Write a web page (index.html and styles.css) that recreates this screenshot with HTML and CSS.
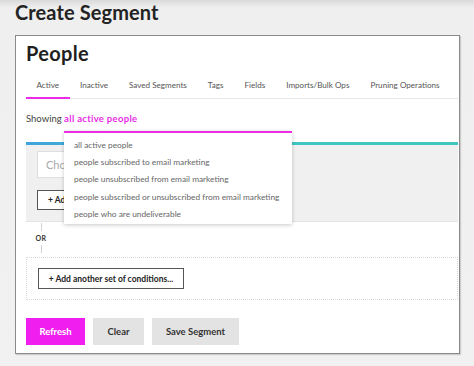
FILE: index.html
```html
<!DOCTYPE html>
<html lang="en">
<head>
    <meta charset="UTF-8">
    <title>Create Segment</title>
    <link rel="stylesheet" href="styles.css">
</head>
<body>
<h1 class="page-title">Create Segment</h1>
<div class="card">
    <h2 class="card-title">People</h2>
    <ul class="tabs">
        <li class="active">Active</li>
        <li>Inactive</li>
        <li>Saved Segments</li>
        <li>Tags</li>
        <li>Fields</li>
        <li>Imports/Bulk Ops</li>
        <li>Pruning Operations</li>
    </ul>
    <div class="showing">
        Showing <a href="#" class="showing-link">all active people</a>
        <ul class="dropdown">
            <li>all active people</li>
            <li>people subscribed to email marketing</li>
            <li>people unsubscribed from email marketing</li>
            <li>people subscribed or unsubscribed from email marketing</li>
            <li>people who are undeliverable</li>
        </ul>
    </div>
    <div class="condition-set">
        <div class="choose">Choose...</div>
        <button class="outline-btn small">+ Add condition</button>
    </div>
    <div class="or">
        <span class="or-line"></span>
        <span class="or-text">OR</span>
        <span class="or-line"></span>
    </div>
    <div class="add-set">
        <button class="outline-btn">+ Add another set of conditions...</button>
    </div>
    <div class="actions">
        <button class="btn primary">Refresh</button>
        <button class="btn clear">Clear</button>
        <button class="btn save">Save Segment</button>
    </div>
</div>
</body>
</html>
```

FILE: styles.css
```css
body { margin: 0; background: linear-gradient(180deg, #dadada 0px, #efefef 8px, #f1f1f1 100%); font-family: 'Lato', sans-serif; color: #222; min-height: 366px; }
.page-title { margin: 0; padding: 0 0 0 15px; height: 35px; font-size: 20px; font-weight: 700; line-height: 24px; letter-spacing: 0.1px; color: #232323; }
.card { margin-left: 15px; width: 432px; height: 317px; padding: 0 1px 0 10px; background: #fff; border: 1px solid #8a8a8a; box-shadow: 1px 1px 1px rgba(0,0,0,0.15); }
.card-title { margin: 0; padding-top: 5px; height: 30px; font-size: 20px; line-height: 24px; font-weight: 700; letter-spacing: 0.3px; color: #1f1f1f; }
.tabs { list-style: none; margin: 0; padding: 0; display: flex; border-bottom: 1px solid #e6e6e6; height: 27px; }
.tabs li { flex-shrink: 0; white-space: nowrap; padding: 0 10.5px; font-size: 8.1px; line-height: 28px; color: #555; border-bottom: 2px solid transparent; height: 26px; }
.tabs li.active { border-bottom-color: #ea2ce6; }
.showing { position: relative; height: 43px; font-size: 9.5px; line-height: 40px; color: #444; }
.showing-link { color: #ea2ce6; font-weight: 700; text-decoration: none; letter-spacing: 0.3px; }
.dropdown { position: absolute; left: 38px; top: 32px; z-index: 2; width: 228px; margin: 0; padding: 3.5px 0 0 0; list-style: none; background: #fff; border-top: 2px solid #ea2ce6; box-shadow: 0 1px 4px rgba(0,0,0,0.22); }
.dropdown li { padding-left: 10px; font-size: 8.3px; line-height: 17.4px; color: #666; white-space: nowrap; }
.condition-set { height: 70px; padding: 9px 0 0 11px; background: linear-gradient(90deg, #3fa3dc 0%, #3ec7c4 40%, #3ec6bf 100%) top / 100% 3px no-repeat, #f0f0f0; border-bottom: 1px solid #e4e4e4; }
.choose { width: 200px; height: 25px; padding-left: 8px; background: #fff; border: 1px solid #dedede; font-size: 11px; line-height: 25px; color: #aaa; }
.outline-btn { display: block; padding: 0 10px; background: #fff; border: 1px solid #555; font-family: 'Lato', sans-serif; font-size: 8.5px; font-weight: 700; color: #222; cursor: pointer; white-space: nowrap; }
.outline-btn.small { margin-top: 12px; height: 20px; }
.or { display: flex; flex-direction: column; align-items: center; width: 30px; height: 35px; }
.or-line { width: 1px; height: 8px; background: #d2d2d2; }
.or-line:first-child { margin-top: 1px; }
.or-text { font-size: 7px; font-weight: 700; color: #333; line-height: 14px; letter-spacing: 0.3px; }
.add-set { height: 41px; padding: 0 11px; border: 1px dotted #d8d8d8; display: flex; align-items: center; }
.add-set .outline-btn { height: 21px; width: 146px; padding: 0; }
.actions { display: flex; gap: 8px; margin-top: 18px; }
.btn { height: 27px; border: none; font-family: 'Lato', sans-serif; font-size: 9.5px; font-weight: 700; cursor: pointer; }
.btn.primary { width: 59px; background: #f01ff0; color: #fff; }
.btn.clear { width: 51px; background: #e3e3e3; color: #333; }
.btn.save { width: 87px; background: #e3e3e3; color: #333; }
```
